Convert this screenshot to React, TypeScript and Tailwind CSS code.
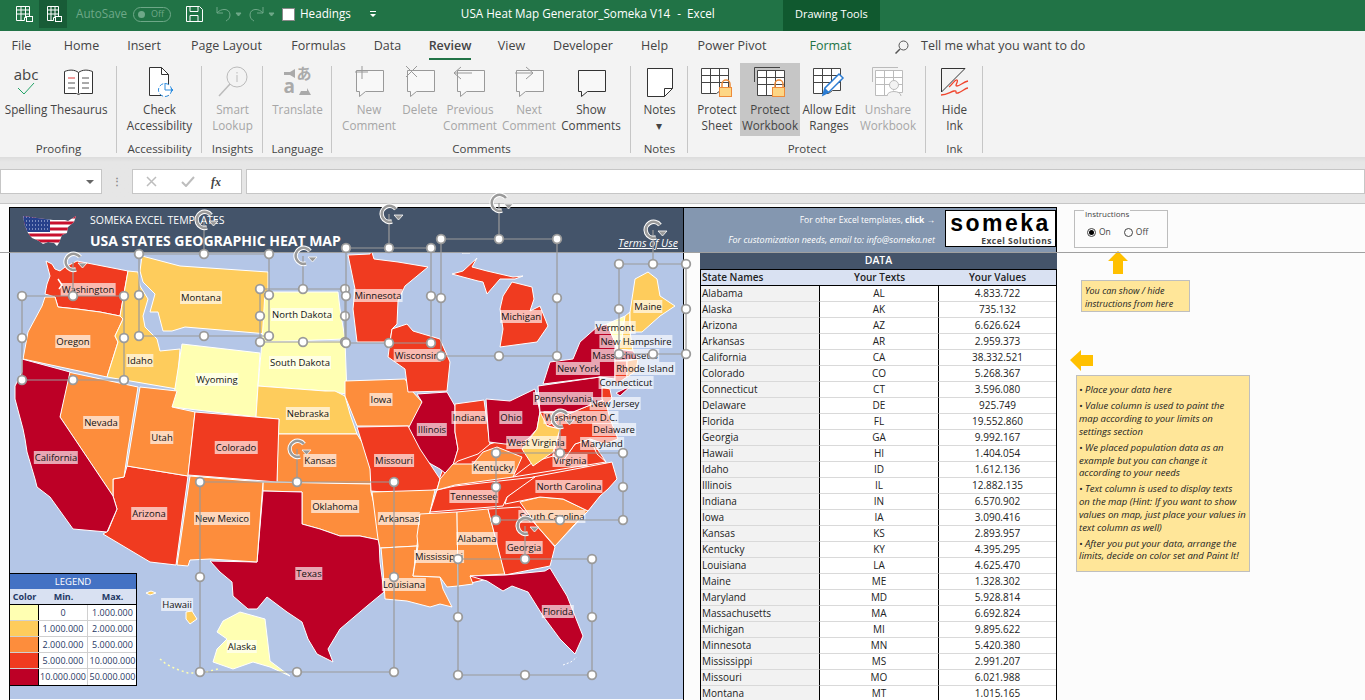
import React from "react";

const Y = "#FFFFB2";
const L = "#FECC5C";
const O = "#FD8D3C";
const R = "#F03B20";
const D = "#BD0026";

// Estados em coordenadas da página
const states: [string, string][] = [
  [R, "430,513 437,490 440,478 455,433 490,445 537,430 540,413 573,413 606,463 600,497 588,512 555,547 505,576 458,587 417,547"],
  [R, "46,262 52,265 55,270 60,272 65,268 77,262 128,272 120,317 100,313 77,310 58,308 55,298 45,295 47,285 50,277"],
  [O, "45,298 55,298 58,308 77,310 100,313 120,317 123,320 115,337 118,343 107,378 23,360 28,333 35,320 42,307"],
  [L, "128,272 138,273 140,287 148,300 143,317 145,328 157,340 160,352 180,350 177,390 107,378 118,343 115,337 123,320 120,317"],
  [L, "142,257 180,267 268,273 268,335 185,328 172,332 163,332 158,313 150,313 155,295 143,283 140,272"],
  [Y, "182,345 260,354 256,418 172,408"],
  [Y, "265,293 338,293 340,310 345,340 262,343"],
  [Y, "262,343 345,342 347,395 325,392 258,387"],
  [L, "258,387 325,392 335,392 345,397 350,415 357,435 278,435 279,420 256,418"],
  [O, "345,382 405,380 412,392 422,403 415,427 357,427 345,397"],
  [O, "278,435 357,435 365,448 370,460 371,485 277,483"],
  [O, "263,483 371,485 371,493 378,520 379,541 360,537 340,537 320,530 302,525 302,493 263,492"],
  [D, "263,492 302,493 302,525 320,530 340,537 360,537 379,541 380,563 384,593 367,607 340,630 328,650 333,663 317,655 308,640 302,623 287,613 267,598 257,610 248,610 233,597 232,583 220,573 210,562 257,563"],
  [O, "190,477 263,483 257,563 210,560 190,561 188,567 177,566"],
  [R, "127,467 188,477 176,566 150,563 103,535 108,532 117,510 113,497 113,480 124,478"],
  [O, "68,373 138,388 128,450 124,478 113,480 113,497 60,418"],
  [D, "22,360 70,373 60,418 113,497 117,510 107,533 73,530 50,498 37,488 35,480 27,453 25,440 23,430 15,400 15,387 22,373"],
  [O, "140,388 177,392 172,408 195,413 188,477 127,467"],
  [R, "195,413 279,420 277,483 188,476"],
  [R, "348,256 370,255 371,250 374,260 398,263 428,268 405,287 398,302 397,325 392,330 390,343 357,343 353,310 355,290"],
  [R, "392,330 407,325 413,332 440,340 443,347 450,363 447,392 408,393 405,370 388,358 390,343"],
  [D, "417,395 447,393 455,407 455,433 458,450 450,478 440,470 422,460 408,430 422,403"],
  [R, "455,405 484,401 490,445 478,455 458,462 453,466 458,450 455,433"],
  [D, "486,400 510,402 535,390 540,413 537,430 528,440 520,445 505,445 489,443"],
  [R, "452,275 463,272 477,259 472,268 487,272 513,278 523,277 515,280 500,280 487,295 483,283 478,282 463,278"],
  [R, "512,283 532,288 534,300 530,312 540,307 548,327 537,343 500,348 503,330 500,310 503,297"],
  [R, "357,428 408,427 420,450 440,480 437,490 430,492 428,497 371,492 370,470"],
  [O, "372,493 435,491 430,513 418,537 417,547 380,549 378,540"],
  [O, "381,549 417,547 413,577 440,578 443,590 452,608 440,605 430,608 407,602 385,600 383,570"],
  [O, "420,515 457,513 458,587 447,588 440,578 413,577 418,547 417,537"],
  [O, "457,513 488,510 505,575 470,577 473,585 458,587"],
  [R, "488,510 520,508 537,527 555,548 550,567 505,576"],
  [D, "470,577 505,576 545,572 550,569 567,597 583,637 575,655 560,640 543,617 528,593 512,587 503,592 487,582"],
  [O, "520,503 540,498 563,500 588,512 573,527 555,547 537,527"],
  [R, "588,512 563,500 540,498 505,505 507,498 533,478 612,463 617,480 608,490 600,497"],
  [R, "455,487 535,478 507,498 503,507 430,513 437,491"],
  [O, "440,480 453,465 473,465 483,453 497,448 522,458 513,478 455,486 437,491"],
  [R, "513,478 533,463 553,457 563,462 575,445 590,440 597,455 606,463"],
  [R, "547,427 573,413 605,400 610,420 618,440 605,445 590,440 575,445 563,462 553,457 560,430"],
  [L, "537,430 540,413 547,427 560,430 553,453 533,467 522,450"],
  [D, "538,387 600,378 605,400 573,413 540,413"],
  [D, "543,385 550,363 573,360 580,343 597,328 607,325 615,343 615,380 600,378"],
  [D, "616,394 630,387 633,385 620,397"],
  [Y, "607,325 625,317 622,340 617,350 615,343"],
  [L, "625,317 630,313 630,333 633,352 617,350 622,340"],
  [L, "635,280 648,273 657,280 660,297 675,307 660,317 642,333 630,333 630,313"],
  [D, "615,350 633,352 638,360 615,362"],
  [R, "615,362 627,362 627,378 615,386"],
  [O, "627,362 638,360 636,372 627,378"],
  [R, "602,388 610,390 612,400 605,406 602,400"],
  [Y, "223,622 240,613 265,620 270,662 290,677 270,668 253,663 233,670 213,663 217,650 227,640 217,633"],
  [L, "186,613 192,612 197,620 190,625 186,620"],
  [L, "146,594 151,592 156,594 150,596"],
  [R, "462,254 472,250 470,254"],
];

const labels: [string, number, number][] = [
  ["Washington", 88, 290], ["Montana", 201, 298], ["North Dakota", 302, 315], ["South Dakota", 300, 363],
  ["Minnesota", 378, 296], ["Wisconsin", 417, 356], ["Michigan", 521, 317], ["Oregon", 73, 342],
  ["Idaho", 140, 361], ["Wyoming", 217, 380], ["Nebraska", 308, 414], ["Iowa", 381, 400],
  ["Nevada", 101, 423], ["Utah", 162, 438], ["Colorado", 236, 448], ["Kansas", 320, 461],
  ["Illinois", 432, 430], ["Indiana", 469, 418], ["Ohio", 511, 418], ["California", 56, 458],
  ["Arizona", 149, 514], ["New Mexico", 222, 519], ["Oklahoma", 335, 507], ["Arkansas", 399, 519],
  ["Missouri", 394, 461], ["Kentucky", 493, 468], ["Tennessee", 474, 497], ["North Carolina", 569, 487],
  ["South Carolina", 552, 517], ["Virginia", 570, 461], ["West Virginia", 536, 443], ["Maryland", 602, 444],
  ["Delaware", 614, 430], ["Washington D.C.", 581, 418], ["New Jersey", 615, 404], ["Pennsylvania", 563, 399],
  ["Connecticut", 626, 383], ["Rhode Island", 645, 369], ["New York", 578, 369], ["Massachusetts", 625, 356],
  ["New Hampshire", 636, 342], ["Vermont", 615, 328], ["Maine", 648, 307], ["Alabama", 477, 539],
  ["Georgia", 524, 548], ["Mississippi", 439, 557], ["Louisiana", 404, 585], ["Texas", 309, 574],
  ["Florida", 558, 612], ["Hawaii", 177, 605], ["Alaska", 242, 647],
];

// x1 y1 x2 y2 da caixa de seleção + centro da alça de rotação
const boxes = [
  [22, 296, 124, 380, 262],
  [139, 254, 269, 336, 220],
  [260, 289, 345, 342, 256],
  [346, 248, 431, 343, 214],
  [441, 239, 557, 356, 203],
  [619, 264, 686, 354, 230],
  [200, 482, 394, 672, 449],
  [458, 559, 592, 675, 526],
  [496, 453, 623, 520, 419],
];

const rows = [
  ["Alabama", "AL", "4.833.722"], ["Alaska", "AK", "735.132"], ["Arizona", "AZ", "6.626.624"],
  ["Arkansas", "AR", "2.959.373"], ["California", "CA", "38.332.521"], ["Colorado", "CO", "5.268.367"],
  ["Connecticut", "CT", "3.596.080"], ["Delaware", "DE", "925.749"], ["Florida", "FL", "19.552.860"],
  ["Georgia", "GA", "9.992.167"], ["Hawaii", "HI", "1.404.054"], ["Idaho", "ID", "1.612.136"],
  ["Illinois", "IL", "12.882.135"], ["Indiana", "IN", "6.570.902"], ["Iowa", "IA", "3.090.416"],
  ["Kansas", "KS", "2.893.957"], ["Kentucky", "KY", "4.395.295"], ["Louisiana", "LA", "4.625.470"],
  ["Maine", "ME", "1.328.302"], ["Maryland", "MD", "5.928.814"], ["Massachusetts", "MA", "6.692.824"],
  ["Michigan", "MI", "9.895.622"], ["Minnesota", "MN", "5.420.380"], ["Mississippi", "MS", "2.991.207"],
  ["Missouri", "MO", "6.021.988"], ["Montana", "MT", "1.015.165"],
];

const legend = [
  ["bg-[#FFFFB2]", "0", "1.000.000"],
  ["bg-[#FECC5C]", "1.000.000", "2.000.000"],
  ["bg-[#FD8D3C]", "2.000.000", "5.000.000"],
  ["bg-[#F03B20]", "5.000.000", "10.000.000"],
  ["bg-[#BD0026]", "10.000.000", "50.000.000"],
];

const tabs = [
  ["File", "w-[19px] ml-[12px]"], ["Home", "w-[35px] ml-[33px]"], ["Insert", "w-[32px] ml-[29px]"],
  ["Page Layout", "w-[71px] ml-[31px]"], ["Formulas", "w-[53px] ml-[30px]"], ["Data", "w-[27px] ml-[29px]"],
  ["Review", "w-[42px] ml-[28px]"], ["View", "w-[27px] ml-[27px]"], ["Developer", "w-[60px] ml-[28px]"],
  ["Help", "w-[27px] ml-[28px]"], ["Power Pivot", "w-[68px] ml-[30px]"], ["Format", "w-[41px] ml-[44px]"],
];

function SheetIcon({ x, y, stroke = "#444" }: { x: number; y: number; stroke?: string }) {
  return (
    <g fill="#fff" stroke={stroke} strokeWidth="1">
      <path d={`M${x + 0.5} ${y + 0.5}h27v22h-8l-4 3h-15z`} />
      <path d={`M${x + 9.5} ${y + 0.5}v25M${x + 18.5} ${y + 0.5}v20M${x + 0.5} ${y + 7.5}h27M${x + 0.5} ${y + 14.5}h27`} fill="none" />
    </g>
  );
}

function Lock({ x, y }: { x: number; y: number }) {
  return (
    <g>
      <path d={`M${x + 3} ${y + 8}v-3a4 4 0 0 1 8 0v3`} fill="none" stroke="#ED8B3A" strokeWidth="1.5" />
      <rect x={x + 0.5} y={y + 8.5} width="12" height="9" fill="#FDD685" stroke="#ED8B3A" />
    </g>
  );
}

function Bubble({ color = "#999", children }: { color?: string; children?: React.ReactNode }) {
  return (
    <svg width="34" height="32" viewBox="0 0 34 32">
      <path d="M4.5 7.5h27v21h-18l-6 5v-5h-3z" transform="translate(0 -3)" fill="#fff" fillOpacity=".4" stroke={color} />
      {children}
    </svg>
  );
}

const spelling = (
  <div className="flex flex-col items-center text-[#444] h-[32px]">
    <span className="text-[15px] leading-[16px]">abc</span>
    <svg width="20" height="14" viewBox="0 0 20 14"><path d="M2 6l6 6L18 1" fill="none" stroke="#21A366" strokeWidth="1" /></svg>
  </div>
);
const thesaurus = (
  <svg width="32" height="30" viewBox="0 0 32 30">
    <path d="M1.5 4.5c5-2 10-2 14 1 4-3 9-3 14-1v22h-12l-2 1-2-1h-12zM15.5 5.5v21" fill="#fff" stroke="#333" />
    <path d="M5 11h7" stroke="#E03A3A" /><path d="M5 16h7M5 21h7M19 11h7M19 16h7M19 21h7" stroke="#555" />
  </svg>
);
const accessibility = (
  <svg width="30" height="32" viewBox="0 0 30 32">
    <path d="M4.5 1.5h12l7 7v21h-19z" fill="#fff" stroke="#333" /><path d="M16.5 1.5v7h7" fill="none" stroke="#333" />
    <circle cx="20" cy="24" r="6.5" fill="#fff" stroke="#2F8EE0" strokeDasharray="4 2" />
    <path d="M20 17v7h8M26 22l2 2-2 2" fill="none" stroke="#2F8EE0" />
  </svg>
);
const lookup = (
  <svg width="32" height="32" viewBox="0 0 32 32" fill="none" stroke="#bbb">
    <circle cx="20" cy="11" r="10" /><path d="M13 18L2 30" strokeWidth="1.5" /><path d="M20 9v7M20 6v1.5" />
  </svg>
);
const translate = (
  <div className="relative w-[30px] h-[32px] text-[#aaa] font-bold">
    <span className="absolute left-[14px] top-[-2px] text-[15px] leading-[18px]" style={{ fontFamily: '"Noto Sans CJK JP", sans-serif' }}>あ</span>
    <span className="absolute left-[1px] top-[9px] text-[19px] leading-[22px]">a</span>
    <svg className="absolute inset-0" width="30" height="32" viewBox="0 0 30 32" fill="#aaa">
      <path d="M1 6h6l5-3v9l-5-3H1zM18 25h6v-3l4 7H16z" />
    </svg>
  </div>
);
const note = (
  <svg width="28" height="32" viewBox="0 0 28 32">
    <path d="M1.5 2.5h25v20l-8 8h-17z" fill="#fff" stroke="#333" /><path d="M26.5 22.5h-8v8" fill="none" stroke="#333" />
  </svg>
);
const protectSheet = (
  <svg width="32" height="32" viewBox="0 0 32 32"><SheetIcon x={0} y={2} /><Lock x={18} y={13} /></svg>
);
const protectBook = (
  <svg width="32" height="32" viewBox="0 0 32 32">
    <path d="M.5 16V1.5H26" fill="none" stroke="#444" /><SheetIcon x={3} y={4} /><Lock x={18} y={13} />
  </svg>
);
const allowEdit = (
  <svg width="32" height="32" viewBox="0 0 32 32">
    <SheetIcon x={0} y={2} />
    <path d="M10 29l2-7L26 8l4 4-14 14z" fill="#fff" stroke="#2B7CD3" strokeWidth="1.5" /><path d="M10 29l2-7 4 4z" fill="#2B7CD3" />
  </svg>
);
const unshare = (
  <svg width="32" height="32" viewBox="0 0 32 32">
    <path d="M.5 16V1.5H26" fill="none" stroke="#bbb" /><SheetIcon x={3} y={4} stroke="#bbb" />
    <circle cx="22" cy="19" r="4.5" fill="#f3f3f3" stroke="#bbb" /><path d="M15 30c0-6 14-6 14 0" fill="#f3f3f3" stroke="#bbb" />
  </svg>
);
const hideInk = (
  <svg width="30" height="32" viewBox="0 0 30 32" fill="none">
    <path d="M1.5 26V2.5H25L1.5 26" stroke="#333" />
    <path d="M9 21c4-3 6-8 8-7s-3 6 0 6 6-4 11-5M1 29c6 0 9-3 13-4s0 3 4 2 7-5 10-5" stroke="#F0442C" strokeWidth="1.3" />
  </svg>
);

function RibbonButton({ label, icon, width, muted, active }: { label: string[]; icon: React.ReactNode; width: string; muted?: boolean; active?: boolean }) {
  return (
    <div className={`${width} h-[73px] flex flex-col items-center shrink-0 ${active ? "bg-[#c6c6c6]" : ""}`}>
      <div className="h-[38px] flex items-center justify-center">{icon}</div>
      <div className={`text-[11.7px] leading-[16px] text-center whitespace-nowrap ${muted ? "text-[#a6a6a6]" : "text-[#444]"}`}>
        {label.map((l) => <div key={l}>{l}</div>)}
      </div>
    </div>
  );
}

function Group({ name, width, pad, children }: { name: string; width: string; pad?: string; children: React.ReactNode }) {
  return (
    <div className={`${width} relative shrink-0 h-full flex flex-col`}>
      <div className={`flex flex-1 justify-center ${pad ?? ""}`}>{children}</div>
      <div className="text-[11.5px] leading-[16px] text-center text-[#444]">{name}</div>
      <div className="absolute right-0 top-[3px] bottom-[4px] w-px bg-[#c6c6c6]" />
    </div>
  );
}

function Handles() {
  return (
    <svg className="absolute left-0 top-0 pointer-events-none" width="1365" height="700" viewBox="0 0 1365 700">
      <path d="M0 252.5H1365" stroke="#a0a0a0" />
      {boxes.map(([x1, y1, x2, y2, ry], i) => {
        const mx = Math.round((x1 + x2) / 2);
        const my = Math.round((y1 + y2) / 2);
        const pts = [[x1, y1], [mx, y1], [x2, y1], [x1, my], [x2, my], [x1, y2], [mx, y2], [x2, y2]];
        return (
          <g key={i}>
            <path d={`M${x1} ${y1}H${x2}V${y2}H${x1}ZM${mx} ${y1}V${ry}`} fill="none" stroke="#9a9a9a" strokeWidth="1.2" />
            <g transform={`translate(${mx} ${ry})`}>
              <path d="M7 -5A8 8 0 1 0 3 7.5" fill="none" stroke="#fff" strokeWidth="4.5" />
              <path d="M7 -5A8 8 0 1 0 3 7.5" fill="none" stroke="#9a9a9a" strokeWidth="2.5" />
              <path d="M5 1h9l-4.5 5z" fill="#9a9a9a" stroke="#fff" strokeWidth=".8" />
            </g>
            {pts.map(([x, y], j) => (
              <circle key={j} cx={x} cy={y} r="4.3" fill="#fff" stroke="#9a9a9a" strokeWidth="1.8" />
            ))}
          </g>
        );
      })}
    </svg>
  );
}

function Flag() {
  return (
    <svg width="54" height="34" viewBox="0 0 54 34">
      <defs>
        <clipPath id="usa">
          <path d="M1 3l14 2 16 2 12 0 3 1 8-5-2 6-6 5-1 6-5 2-3 8-2 3-3-3-6-1-5 2-4-3-7-3-4-5-3-7z" />
        </clipPath>
      </defs>
      <g clipPath="url(#usa)">
        <rect width="54" height="34" fill="#fff" />
        <path d="M0 4h54M0 10h54M0 16h54M0 22h54M0 28h54" stroke="#C8102E" strokeWidth="3" />
        <rect width="28" height="19" fill="#27408B" />
        <path d="M1 4h27M1 8h27M1 12h27M1 16h27" stroke="#cdd6ee" strokeWidth="1" strokeDasharray="1 2" />
      </g>
    </svg>
  );
}

export default function App() {
  return (
    <div className="relative w-[1365px] h-[700px] overflow-hidden bg-[#fcfcfc] text-[#222]" style={{ fontFamily: '"Open Sans", sans-serif' }}>
      {/* Barra de título */}
      <div className="h-[31px] bg-[#217346] flex items-center pb-[3px] text-white text-[11.7px]">
        <svg className="ml-[16px]" width="17" height="16" viewBox="0 0 17 16" fill="none" stroke="#fff"><path d="M.5 .5h13v11h-5v3h-8zM5 .5v14M9.5 .5v11M.5 4h13M.5 8h13" /><rect x="10.5" y="10.5" width="6" height="5" fill="#217346" /></svg>
        <div className="ml-[6px] w-[28px] h-[28px] bg-[#185c37] flex items-center justify-center">
          <svg width="17" height="16" viewBox="0 0 17 16" fill="none" stroke="#fff"><path d="M2.5 .5h11v11h-5v3h-6zM6 .5v14M10 .5v11M2.5 4h11M2.5 8h11" /><rect x="10.5" y="10.5" width="6" height="5" fill="#185c37" /></svg>
        </div>
        <span className="ml-[9px] text-[#6ea888] w-[50px] whitespace-nowrap">AutoSave</span>
        <div className="ml-[7px] w-[38px] h-[15px] border border-[#6ea888] rounded-full flex items-center text-[#6ea888] text-[9px]">
          <span className="ml-[4px] w-[7px] h-[7px] rounded-full bg-[#6ea888]" /><span className="ml-[6px]">Off</span>
        </div>
        <svg className="ml-[15px]" width="17" height="16" viewBox="0 0 17 16" fill="none" stroke="#fff"><path d="M.5 .5h13l3 3v12H.5zM4 .5v5h8v-5M4 15.5v-6h8v6" /></svg>
        <svg className="ml-[13px]" width="26" height="16" viewBox="0 0 26 16" fill="none" stroke="#6ea888"><path d="M1 1v6h6M1 7c4-5 13-5 13 2 0 3-2 5-4 6" /><path d="M20 7h5l-2.5 3z" fill="#6ea888" /></svg>
        <svg className="ml-[7px]" width="26" height="16" viewBox="0 0 26 16" fill="none" stroke="#6ea888"><path d="M14 1v6H8M14 7C10 2 1 2 1 9c0 3 2 5 4 6" /><path d="M20 7h5l-2.5 3z" fill="#6ea888" /></svg>
        <div className="ml-[7px] w-[13px] h-[13px] bg-white border border-[#8a8a8a]" />
        <span className="ml-[5px] whitespace-nowrap">Headings</span>
        <svg className="ml-[18px]" width="8" height="8" viewBox="0 0 8 8" fill="#fff"><path d="M1 1h6v1H1zM1 4h6L4 7z" /></svg>
        <div className="ml-[84px] w-[322px] flex whitespace-nowrap">
          <span>USA Heat Map Generator_Someka V14</span>
          <span className="ml-[7px]">-</span>
          <span className="ml-[6px]">Excel</span>
        </div>
        <div className="w-[97px] h-[31px] -mb-[3px] bg-[#10592f] flex items-center justify-center pb-[3px] text-[11px]">Drawing Tools</div>
      </div>

      {/* Abas */}
      <div className="h-[31px] bg-[#f3f3f3] flex items-center text-[12.5px] text-[#444]">
        {tabs.map(([t, c]) => (
          <div key={t} className={`${c} relative whitespace-nowrap flex justify-center ${t === "Format" ? "text-[#217346]" : ""} ${t === "Review" ? "font-semibold" : ""}`}>
            {t}
            {t === "Review" && <div className="absolute left-0 right-0 top-[21px] h-[2px] bg-[#217346]" />}
          </div>
        ))}
        <svg className="ml-[44px]" width="14" height="14" viewBox="0 0 14 14" fill="none" stroke="#555"><circle cx="8.5" cy="5.5" r="4.5" /><path d="M5 9l-4.500 4.500" strokeWidth="1.5" /></svg>
        <span className="ml-[12px] whitespace-nowrap">Tell me what you want to do</span>
      </div>

      {/* Faixa de opções */}
      <div className="h-[95px] bg-[#f3f3f3] flex pt-[1px]">
        <Group name="Proofing" width="w-[117px]" pad="!justify-start">
          <RibbonButton label={["Spelling"]} icon={spelling} width="w-[52px]" />
          <RibbonButton label={["Thesaurus"]} icon={thesaurus} width="w-[54px]" />
        </Group>
        <Group name="Accessibility" width="w-[85px]">
          <RibbonButton label={["Check", "Accessibility"]} icon={accessibility} width="w-[80px]" />
        </Group>
        <Group name="Insights" width="w-[61px]">
          <RibbonButton label={["Smart", "Lookup"]} icon={lookup} width="w-[56px]" muted />
        </Group>
        <Group name="Language" width="w-[69px]">
          <RibbonButton label={["Translate"]} icon={translate} width="w-[60px]" muted />
        </Group>
        <Group name="Comments" width="w-[299px]" pad="!justify-start pl-[11px]">
          <RibbonButton label={["New", "Comment"]} icon={<Bubble><path d="M10 0v13M3 6h13" stroke="#999" /></Bubble>} width="w-[52px]" muted />
          <RibbonButton label={["Delete"]} icon={<Bubble><path d="M3 0l11 11M14 0L3 11" stroke="#999" /></Bubble>} width="w-[50px]" muted />
          <RibbonButton label={["Previous", "Comment"]} icon={<Bubble><path d="M1 7h18M8 1L1 7l7 6" fill="none" stroke="#999" /></Bubble>} width="w-[50px]" muted />
          <RibbonButton label={["Next", "Comment"]} icon={<Bubble><path d="M3 7h18M14 1l7 6-7 6" fill="none" stroke="#999" /></Bubble>} width="w-[68px]" muted />
          <RibbonButton label={["Show", "Comments"]} icon={<Bubble color="#333" />} width="w-[56px]" />
        </Group>
        <Group name="Notes" width="w-[57px]">
          <RibbonButton label={["Notes", "▾"]} icon={note} width="w-[50px]" />
        </Group>
        <Group name="Protect" width="w-[238px]" pad="!justify-start pl-[6px]">
          <RibbonButton label={["Protect", "Sheet"]} icon={protectSheet} width="w-[46px]" />
          <RibbonButton label={["Protect", "Workbook"]} icon={protectBook} width="w-[60px]" active />
          <RibbonButton label={["Allow Edit", "Ranges"]} icon={allowEdit} width="w-[58px]" />
          <RibbonButton label={["Unshare", "Workbook"]} icon={unshare} width="w-[60px]" muted />
        </Group>
        <Group name="Ink" width="w-[57px]">
          <RibbonButton label={["Hide", "Ink"]} icon={hideInk} width="w-[50px]" />
        </Group>
      </div>

      {/* Barra de fórmulas */}
      <div className="h-[47px] bg-gradient-to-b from-[#dcdcdc] to-[#e6e6e6] to-[5px] pt-[12px] border-b border-[#c6c6c6]">
        <div className="flex h-[25px]">
          <div className="w-[102px] bg-white border border-[#c6c6c6] flex items-center justify-end pr-[7px]">
            <span className="w-0 h-0 border-x-[4px] border-x-transparent border-t-[4px] border-t-[#666]" />
          </div>
          <div className="w-[30px] flex items-center justify-center text-[#888] text-[10px] font-bold">⋮</div>
          <div className="w-[110px] bg-white border border-[#c6c6c6] flex items-center text-[#bdbdbd]">
            <svg className="ml-[13px]" width="11" height="11" viewBox="0 0 11 11" fill="none" stroke="#bdbdbd" strokeWidth="1.5"><path d="M1 1l9 9M10 1l-9 9" /></svg>
            <svg className="ml-[24px]" width="14" height="11" viewBox="0 0 14 11" fill="none" stroke="#bdbdbd" strokeWidth="2"><path d="M1 6l4 4 8-9" /></svg>
            <span className="ml-[16px] text-[#444] text-[12px] italic font-bold" style={{ fontFamily: '"Liberation Serif", serif' }}>fx</span>
          </div>
          <div className="ml-[4px] flex-1 bg-white border border-[#c6c6c6]" />
        </div>
      </div>

      {/* Planilha */}
      <div className="flex pl-[9px] pt-[3px]">
        <div className="w-[675px] shrink-0 border-x border-t border-black">
          <div className="h-[44px] bg-[#44546A] flex text-white">
            <div className="ml-[12px] mt-[5px]"><Flag /></div>
            <div className="ml-[14px]">
              <div className="text-[10.5px] leading-[14px] mt-[5px] whitespace-nowrap">SOMEKA EXCEL TEMPLATES</div>
              <div className="text-[14px] leading-[16px] mt-[6px] font-bold whitespace-nowrap">USA STATES GEOGRAPHIC HEAT MAP</div>
            </div>
            <div className="ml-auto mr-[5px] mt-[28px] text-[10.5px] leading-[14px] italic underline whitespace-nowrap">Terms of Use</div>
          </div>
          <div className="relative h-[447px] bg-[#B4C6E7]">
            <svg className="absolute inset-0" width="673" height="447" viewBox="10 253 673 447">
              {states.map(([c, p], i) => (
                <polygon key={i} points={p} fill={c} stroke="#fff" strokeWidth="1" strokeLinejoin="round" />
              ))}
              <path d="M160 660l6 5 10 5 12 4 14 0 16-4" fill="none" stroke="#FFFFB2" strokeWidth="1.5" strokeDasharray="2 3" />
              <path d="M563 666l8-3 6-5" fill="none" stroke="#fff" strokeWidth="1" strokeDasharray="2 2" />
              <path d="M58 280l4 6-3 4" fill="none" stroke="#fff" strokeWidth="1.5" />
            </svg>
            {labels.map(([t, x, y]) => (
              <div
                key={t}
                className="absolute -translate-x-1/2 h-[13px] px-[1px] bg-white/65 text-[9.5px] leading-[13px] text-[#111] whitespace-nowrap"
                style={{ left: x - 10, top: y - 259 }}
              >
                {t}
              </div>
            ))}
            {/* Legenda */}
            <div className="absolute left-0 top-[321px] w-[127px] border border-black border-l-0 bg-white text-[9px] text-[#1f3864]">
              <div className="h-[15px] bg-[#4472C4] text-white text-center text-[9.5px] leading-[15px]">LEGEND</div>
              <div className="h-[16px] bg-[#D9E1F2] grid grid-cols-[29px_49px_49px] text-center font-bold leading-[16px] border-b border-black">
                <span>Color</span><span>Min.</span><span>Max.</span>
              </div>
              {legend.map(([c, a, b]) => (
                <div key={b} className="h-[16px] grid grid-cols-[29px_49px_49px] text-center leading-[15px] border-b border-[#d0d0d0] last:border-b-0">
                  <span className={`${c} border-r border-black`} />
                  <span className="border-r border-[#d0d0d0]">{a}</span>
                  <span>{b}</span>
                </div>
              ))}
            </div>
          </div>
        </div>

        <div className="w-[373px] shrink-0">
          <div className="h-[44px] border-t border-r border-black bg-[#8497B0] flex text-white box-content -mb-[1px]">
            <div className="flex-1 text-right text-[8.5px] pr-[10px]">
              <div className="mt-[5px] leading-[13px]">For other Excel templates, <b>click →</b></div>
              <div className="mt-[7px] leading-[13px] italic text-[9px] whitespace-nowrap">For customization needs, email to: info@someka.net</div>
            </div>
            <div className="w-[111px] h-[37px] mt-[2px] bg-white border border-black flex flex-col items-center justify-between text-black">
              <div className="text-[23px] leading-[24px] font-bold tracking-[2.5px]" style={{ fontFamily: '"Liberation Sans", sans-serif' }}>someka</div>
              <div className="self-end mr-[3px] mb-[1px] text-[8.5px] leading-[9px] font-bold text-[#444] tracking-[.5px]">Excel Solutions</div>
            </div>
          </div>
          <div className="ml-[16px] w-[357px] mt-[1px] text-[10px]">
            <div className="h-[17px] bg-[#44546A] text-white font-semibold text-center text-[10.5px] leading-[17px]">DATA</div>
            <div className="border border-black">
              <div className="h-[16px] bg-[#D9E1F2] grid grid-cols-[119px_119px_117px] font-semibold text-center leading-[15px] border-b border-black">
                <span className="text-left pl-[1px]">State Names</span><span>Your Texts</span><span>Your Values</span>
              </div>
              {rows.map(([a, b, c]) => (
                <div key={a} className="h-[16px] grid grid-cols-[119px_119px_117px] text-center leading-[15px]">
                  <span className="text-left pl-[1px] bg-[#f2f2f2] border-r border-black border-b border-b-[#d9d9d9]">{a}</span>
                  <span className="border-r border-black border-b border-b-[#d9d9d9] bg-white">{b}</span>
                  <span className="border-b border-[#d9d9d9] bg-white">{c}</span>
                </div>
              ))}
            </div>
          </div>
        </div>

        {/* Instruções */}
        <div className="ml-[17px] flex flex-col items-start">
          <div className="mt-[3px] w-[94px] h-[38px] border border-[#bdbdbd] relative">
            <span className="absolute left-[9px] top-[-3px] px-[1px] bg-[#fcfcfc] text-[8px] leading-[11px] text-[#444]">Instructions</span>
            <div className="flex items-center text-[8.5px] text-[#444] mt-[15px] ml-[12px]">
              <span className="w-[9px] h-[9px] rounded-full border border-[#444] flex items-center justify-center"><span className="w-[5px] h-[5px] rounded-full bg-black" /></span>
              <span className="ml-[3px]">On</span>
              <span className="ml-[13px] w-[9px] h-[9px] rounded-full border border-[#444]" />
              <span className="ml-[3px]">Off</span>
            </div>
          </div>
          <svg className="ml-[34px] mt-[3px]" width="20" height="23" viewBox="0 0 20 23" fill="#FFC000"><path d="M10 0l10 10h-5v13H5V10H0z" /></svg>
          <div className="ml-[7px] mt-[6px] w-[109px] h-[32px] bg-[#FFE699] border border-[#bfbfbf] text-[9px] leading-[13px] italic text-[#222] pl-[3px] pt-[3px] whitespace-nowrap">
            You can show / hide<br />instructions from here
          </div>
          <svg className="-ml-[4px] mt-[38px]" width="24" height="21" viewBox="0 0 24 21" fill="#FFC000"><path d="M0 10L11 0v5h12v11H11v5z" /></svg>
          <div className="ml-[2px] mt-[4px] w-[174px] h-[197px] bg-[#FFE699] border border-[#bfbfbf] text-[9.5px] leading-[12.7px] italic text-[#222] pl-[2px] pt-[8px] flex flex-col gap-[3.5px] whitespace-nowrap">
            <div>• Place your data here</div>
            <div>• Value column is used to paint the<br />map according to your limits on<br />settings section</div>
            <div>• We placed population data as an<br />example but you can change it<br />according to your needs</div>
            <div>• Text column is used to display texts<br />on the map (Hint: If you want to show<br />values on map, just place your values in<br />text column as well)</div>
            <div>• After you put your data, arrange the<br />limits, decide on color set and Paint It!</div>
          </div>
        </div>
      </div>

      <Handles />
    </div>
  );
}
